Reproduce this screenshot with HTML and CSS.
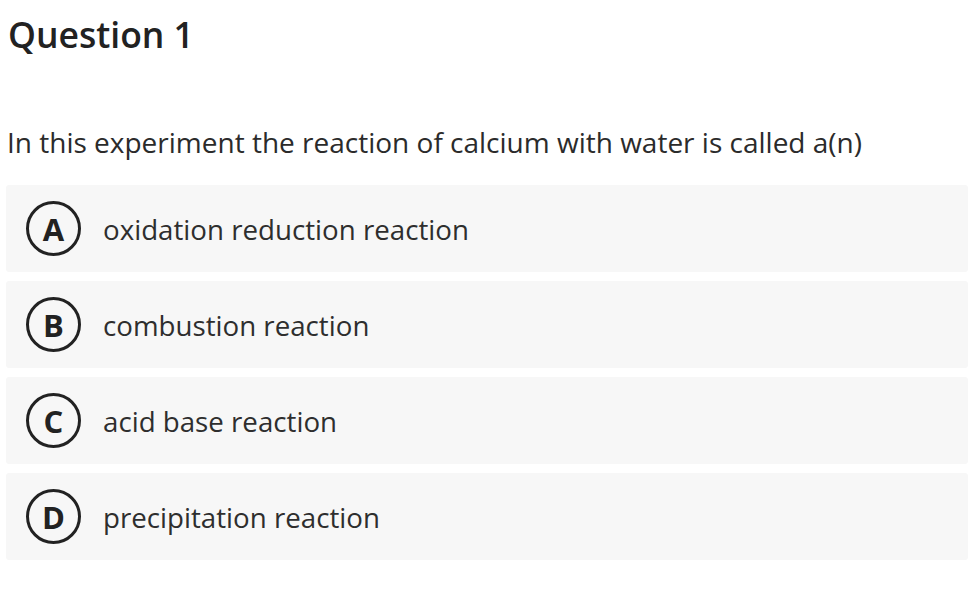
FILE: index.html
```html
<!DOCTYPE html>
<html lang="en">
<head>
  <meta charset="UTF-8" />
  <title>Question 1</title>
  <link rel="stylesheet" href="styles.css">
</head>
<body>
  <div class="quiz">
    <h2 class="quiz-title">Question 1</h2>

    <p class="question">In this experiment the reaction of calcium with water is called a(n)</p>

    <div class="options">
      <div class="option">
        <span class="letter">A</span>
        <span class="answer">oxidation reduction reaction</span>
      </div>
      <div class="option">
        <span class="letter">B</span>
        <span class="answer">combustion reaction</span>
      </div>
      <div class="option">
        <span class="letter">C</span>
        <span class="answer">acid base reaction</span>
      </div>
      <div class="option">
        <span class="letter">D</span>
        <span class="answer">precipitation reaction</span>
      </div>
    </div>
  </div>
</body>
</html>
```

FILE: styles.css
```css
body {
  font-family: "Open Sans", "Liberation Sans", sans-serif;
  color: #2b2b2b;
  background: #fff;
  margin: 0;
}

.quiz {
  padding: 9px 0 0 6px;
}

.quiz-title {
  margin: 0 0 0 2px;
  font-size: 35.5px;
  font-weight: 600;
  line-height: 50px;
  color: #222;
}

.question {
  margin: 63px 0 0 1px;
  font-size: 28px;
  line-height: 40px;
}

.options {
  display: flex;
  flex-direction: column;
  gap: 9px;
  margin-top: 23px;
}

.option {
  display: flex;
  align-items: center;
  height: 87px;
  padding-left: 20px;
  background: #f7f7f7;
  border-radius: 3px;
}

.letter {
  display: flex;
  align-items: center;
  justify-content: center;
  width: 49px;
  height: 49px;
  border: 3px solid #222;
  border-radius: 50%;
  font-size: 31px;
  font-weight: 700;
  color: #222;
}

.answer {
  margin-left: 22px;
  font-size: 27.7px;
  color: #2e2e2e;
}
```
